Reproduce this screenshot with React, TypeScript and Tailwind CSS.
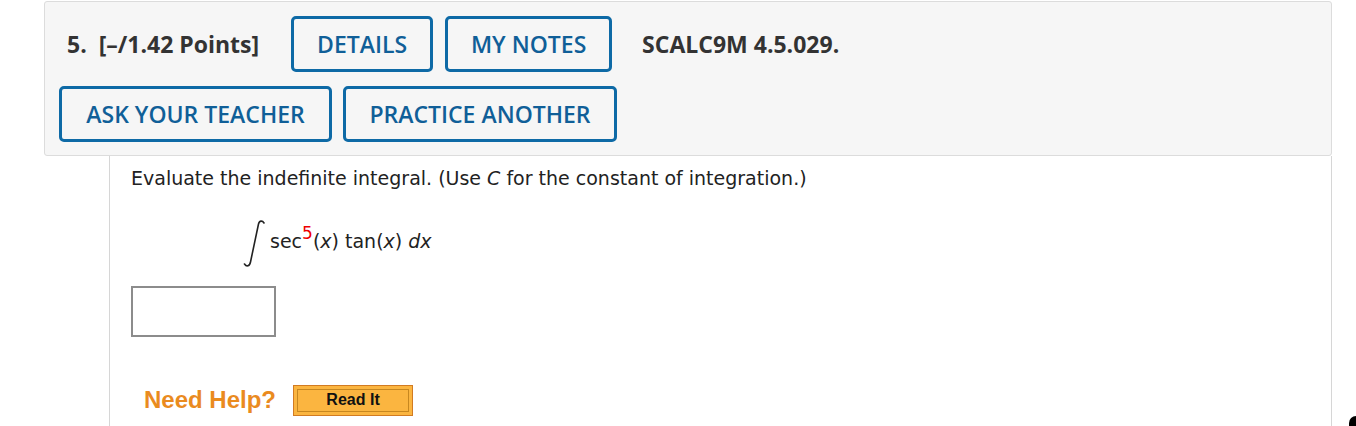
import React from "react";

const btn =
  "flex items-center justify-center h-[56px] border-[3px] border-[#0e6aa6] rounded-[5px] text-[#105f98] text-[23px] font-semibold bg-transparent";

export default function App() {
  return (
    <div className="relative w-[1356px] h-[426px] bg-white overflow-hidden font-['Open_Sans',sans-serif]">
      <div className="ml-[44px] mt-[1px] w-[1288px] h-[155px] bg-[#f6f6f6] border border-[#dcdcdc] rounded-[3px] px-[14px] pt-[14px]">
        <div className="flex items-center">
          <div className="pl-[8px] text-[23px] font-bold text-[#333] whitespace-pre">5.  [–/1.42 Points]</div>
          <div className={btn + " w-[142px] ml-[32px]"}>DETAILS</div>
          <div className={btn + " w-[167px] ml-[12px]"}>MY NOTES</div>
          <div className="ml-[30px] text-[23px] font-bold text-[#333]">SCALC9M 4.5.029.</div>
        </div>
        <div className="flex items-center gap-[11px] mt-[14px]">
          <div className={btn + " w-[273px] h-[55px]"}>ASK YOUR TEACHER</div>
          <div className={btn + " w-[274px] h-[55px]"}>PRACTICE ANOTHER</div>
        </div>
      </div>
      <div className="ml-[109px] w-[1223px] h-[270px] border-x border-[#d6d6d6] pl-[21px] pt-[8px] text-[19px] text-[#222] font-['DejaVu_Sans',Verdana,sans-serif]">
        <div className="leading-[28px]">
          Evaluate the indefinite integral. (Use <i>C</i> for the constant of integration.)
        </div>
        <div className="flex items-center ml-[112px] mt-[27px] h-[49px]">
          <svg width="22" height="49" viewBox="0 0 22 49" className="mr-[5px]">
            <path
              d="M21 4 C19.5 1.5 16.5 1.2 15.5 5 L7.5 43 C6.5 47.5 3.5 48 1.5 45"
              fill="none"
              stroke="#222"
              strokeWidth="1.6"
              strokeLinecap="round"
            />
          </svg>
          <span className="relative top-[-2px] leading-[24px]">
            sec<span className="text-[#e00] text-[17px] relative top-[-9px]">5</span>(<i>x</i>) tan(<i>x</i>) <i>dx</i>
          </span>
        </div>
        <div className="mt-[18px] w-[145px] h-[51px] border-2 border-[#8c8c8c] bg-white"></div>
        <div className="flex items-center mt-[45px] ml-[13px] font-['Liberation_Sans',Arial,sans-serif]">
          <span className="text-[24px] font-bold text-[#ea8b1f]">Need Help?</span>
          <div className="ml-[17px] w-[120px] h-[31px] bg-[#fbb540] border border-[#d27b22] p-[3px]">
            <div className="w-full h-full border border-[#c7871f] flex items-center justify-center text-[16px] font-bold text-[#111]">
              Read It
            </div>
          </div>
        </div>
      </div>
      <div className="absolute right-0 bottom-0 w-[7px] h-[10px] bg-black rounded-tl-[7px]"></div>
    </div>
  );
}
